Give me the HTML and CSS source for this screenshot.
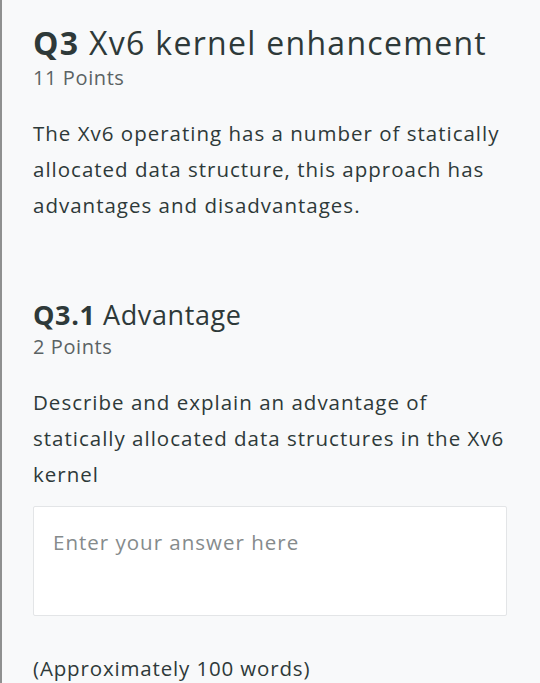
FILE: index.html
```html
<!DOCTYPE html>
<html>
<head>
<meta charset="utf-8">
<link rel="stylesheet" href="styles.css">
</head>
<body>
<div class="page">
  <section class="question">
    <h1 class="q-title"><b>Q3</b> Xv6 kernel enhancement</h1>
    <div class="points">11 Points</div>
    <p class="body">The Xv6 operating has a number of statically allocated data structure, this approach has advantages and disadvantages.</p>
  </section>
  <section class="subquestion">
    <h2 class="sub-title"><b>Q3.1</b> Advantage</h2>
    <div class="points">2 Points</div>
    <p class="body">Describe and explain an advantage of statically allocated data structures in the Xv6 kernel</p>
    <div class="answer">Enter your answer here</div>
    <p class="note">(Approximately 100 words)</p>
  </section>
</div>
</body>
</html>
```

FILE: styles.css
```css
html, body {
  margin: 0;
  padding: 0;
  background: #f8f9fa;
}
body {
  font-family: "Open Sans", Lato, sans-serif;
  color: #2e3939;
  height: 683px;
  overflow: hidden;
}
.page {
  border-left: 2px solid #8f9090;
  padding: 23px 33px 0 31px;
  min-height: 683px;
  box-sizing: border-box;
}
.q-title {
  margin: 0;
  font-size: 32px;
  font-weight: 400;
  line-height: 40px;
  letter-spacing: 1.3px;
}
.q-title b, .sub-title b {
  font-weight: 700;
}
.points {
  margin-top: 2px;
  font-size: 20px;
  line-height: 26px;
  letter-spacing: 0.6px;
  color: #5b6364;
}
.body {
  margin: 24px 0 0;
  font-size: 20.5px;
  line-height: 36px;
  letter-spacing: 1px;
}
.subquestion {
  margin-top: 75px;
}
.sub-title {
  margin: 0;
  font-size: 27px;
  font-weight: 400;
  line-height: 34px;
  letter-spacing: 0.6px;
}
.answer {
  margin-top: 14px;
  height: 110px;
  background: #fff;
  border: 1px solid #e3e5e7;
  border-radius: 2px;
  box-sizing: border-box;
  padding: 22px 19px;
  font-size: 20.5px;
  line-height: 26px;
  letter-spacing: 1px;
  color: #858b8c;
}
.note {
  margin: 34px 0 0;
  font-size: 20.5px;
  line-height: 36px;
  letter-spacing: 0.85px;
}
```
